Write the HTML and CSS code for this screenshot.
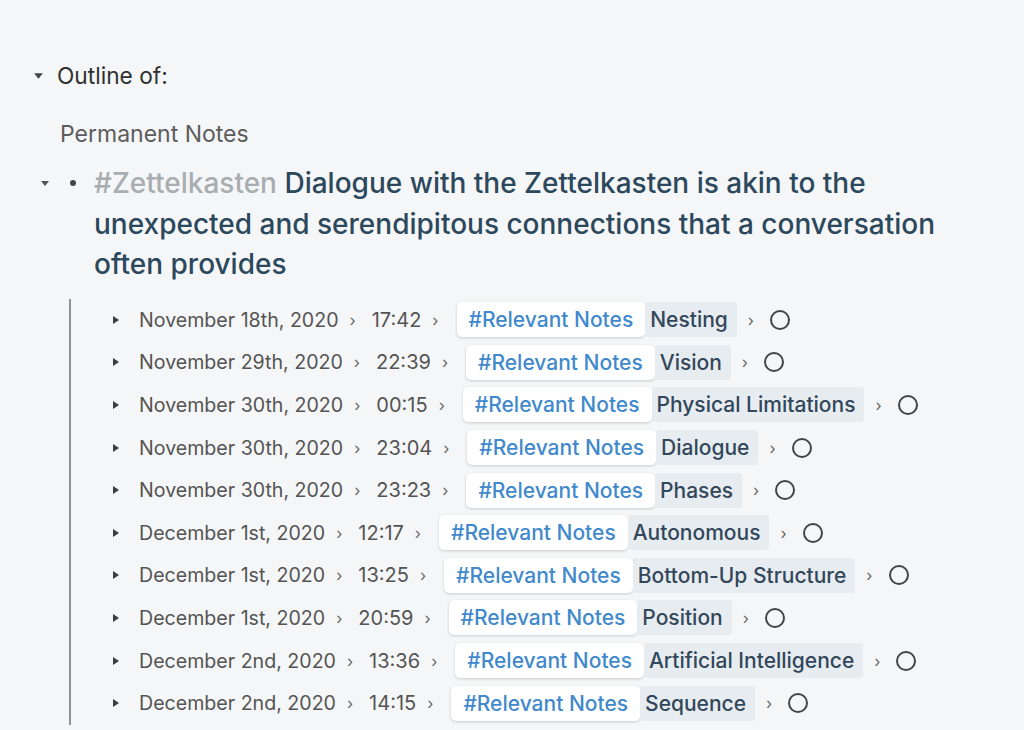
FILE: index.html
```html
<!DOCTYPE html>
<html>
<head>
<meta charset="utf-8">
<link rel="stylesheet" href="styles.css">
</head>
<body>
<div class="page">
  <div class="outline-head">
    <svg class="caret-down small" viewBox="0 0 10 10"><path d="M1 3 L9 3 L5 8 Z"/></svg>
    <span>Outline of:</span>
  </div>
  <div class="subtitle">Permanent Notes</div>
  <div class="block">
    <div class="block-ctrl">
      <svg class="caret-down" viewBox="0 0 10 10"><path d="M1 3 L9 3 L5 8 Z"/></svg>
      <span class="bullet"></span>
    </div>
    <div class="block-text"><span class="tag-muted">#Zettelkasten</span> Dialogue with the Zettelkasten is akin to the unexpected and serendipitous connections that a conversation often provides</div>
  </div>
  <div class="children">
    <div class="row"><svg class="caret-right" viewBox="0 0 8 12"><path d="M1 2 L7 6 L1 10 Z"/></svg><span class="date">November 18th, 2020</span><span class="sep">›</span><span class="time">17:42</span><span class="sep">›</span><span class="tag">#Relevant Notes</span><span class="label">Nesting</span><span class="sep">›</span><span class="circle"></span></div>
    <div class="row"><svg class="caret-right" viewBox="0 0 8 12"><path d="M1 2 L7 6 L1 10 Z"/></svg><span class="date">November 29th, 2020</span><span class="sep">›</span><span class="time">22:39</span><span class="sep">›</span><span class="tag">#Relevant Notes</span><span class="label">Vision</span><span class="sep">›</span><span class="circle"></span></div>
    <div class="row"><svg class="caret-right" viewBox="0 0 8 12"><path d="M1 2 L7 6 L1 10 Z"/></svg><span class="date">November 30th, 2020</span><span class="sep">›</span><span class="time">00:15</span><span class="sep">›</span><span class="tag">#Relevant Notes</span><span class="label">Physical Limitations</span><span class="sep">›</span><span class="circle"></span></div>
    <div class="row"><svg class="caret-right" viewBox="0 0 8 12"><path d="M1 2 L7 6 L1 10 Z"/></svg><span class="date">November 30th, 2020</span><span class="sep">›</span><span class="time">23:04</span><span class="sep">›</span><span class="tag">#Relevant Notes</span><span class="label">Dialogue</span><span class="sep">›</span><span class="circle"></span></div>
    <div class="row"><svg class="caret-right" viewBox="0 0 8 12"><path d="M1 2 L7 6 L1 10 Z"/></svg><span class="date">November 30th, 2020</span><span class="sep">›</span><span class="time">23:23</span><span class="sep">›</span><span class="tag">#Relevant Notes</span><span class="label">Phases</span><span class="sep">›</span><span class="circle"></span></div>
    <div class="row"><svg class="caret-right" viewBox="0 0 8 12"><path d="M1 2 L7 6 L1 10 Z"/></svg><span class="date">December 1st, 2020</span><span class="sep">›</span><span class="time">12:17</span><span class="sep">›</span><span class="tag">#Relevant Notes</span><span class="label">Autonomous</span><span class="sep">›</span><span class="circle"></span></div>
    <div class="row"><svg class="caret-right" viewBox="0 0 8 12"><path d="M1 2 L7 6 L1 10 Z"/></svg><span class="date">December 1st, 2020</span><span class="sep">›</span><span class="time">13:25</span><span class="sep">›</span><span class="tag">#Relevant Notes</span><span class="label">Bottom-Up Structure</span><span class="sep">›</span><span class="circle"></span></div>
    <div class="row"><svg class="caret-right" viewBox="0 0 8 12"><path d="M1 2 L7 6 L1 10 Z"/></svg><span class="date">December 1st, 2020</span><span class="sep">›</span><span class="time">20:59</span><span class="sep">›</span><span class="tag">#Relevant Notes</span><span class="label">Position</span><span class="sep">›</span><span class="circle"></span></div>
    <div class="row"><svg class="caret-right" viewBox="0 0 8 12"><path d="M1 2 L7 6 L1 10 Z"/></svg><span class="date">December 2nd, 2020</span><span class="sep">›</span><span class="time">13:36</span><span class="sep">›</span><span class="tag">#Relevant Notes</span><span class="label">Artificial Intelligence</span><span class="sep">›</span><span class="circle"></span></div>
    <div class="row"><svg class="caret-right" viewBox="0 0 8 12"><path d="M1 2 L7 6 L1 10 Z"/></svg><span class="date">December 2nd, 2020</span><span class="sep">›</span><span class="time">14:15</span><span class="sep">›</span><span class="tag">#Relevant Notes</span><span class="label">Sequence</span><span class="sep">›</span><span class="circle"></span></div>
  </div>
</div>
</body>
</html>
```

FILE: styles.css
```css
* { box-sizing: border-box; }
html, body { margin: 0; padding: 0; }
body {
  background: #f5f6f7;
  font-family: Inter, "Noto Sans", sans-serif;
  width: 1024px;
  height: 730px;
  overflow: hidden;
}
.page {
  padding-top: 62px;
}
.outline-head {
  display: flex;
  align-items: center;
  padding-left: 33px;
  font-size: 22.7px;
  color: #303030;
  height: 26px;
}
.caret-down { width: 10px; height: 10px; fill: #555; }
.caret-down.small { width: 11px; height: 11px; margin-right: 13px; fill: #444; }
.subtitle {
  margin-top: 33px;
  padding-left: 60px;
  font-size: 23px;
  color: #5c5c5c;
  height: 26px;
  line-height: 26px;
}
.block {
  display: flex;
  margin-top: 16px;
}
.block-ctrl {
  display: flex;
  align-items: center;
  height: 40px;
  padding-left: 40px;
  width: 94px;
  gap: 20px;
  flex: none;
}
.bullet {
  width: 6px; height: 6px; border-radius: 50%;
  background: #444;
}
.block-text {
  font-size: 28px;
  font-weight: 500;
  line-height: 40.5px;
  color: #2c485d;
  width: 880px;
}
.tag-muted { color: #a8adb1; }
.children {
  margin-left: 69px;
  margin-top: 14px;
  border-left: 2px solid #8f9092;
  height: 426px;
}
.row {
  display: flex;
  align-items: center;
  height: 42.6px;
  padding-left: 41px;
  font-size: 19.6px;
  color: #545454;
}
.caret-right { width: 8px; height: 12px; fill: #3c3c3c; margin-right: 19px; flex: none; }
.date { white-space: nowrap; }
.sep { color: #666; font-size: 16px; margin: 0 10px 0 11px; }
.time { margin-left: 6px; font-size: 20px; }
.tag {
  background: #fff;
  color: #4189cc;
  font-weight: 500;
  font-size: 21px;
  line-height: 25px;
  padding: 5px 12px;
  border-radius: 5px;
  box-shadow: 0 1px 3px rgba(0,0,0,0.18);
  margin-left: 8px;
}
.label {
  background: #e7ecf1;
  color: #32475a;
  font-weight: 500;
  font-size: 21px;
  line-height: 25px;
  padding: 5px 9px 5px 5px;
  border-radius: 3px;
}
.circle {
  width: 20px; height: 20px;
  border: 2px solid #444;
  border-radius: 50%;
  margin-left: 6px;
}
```
